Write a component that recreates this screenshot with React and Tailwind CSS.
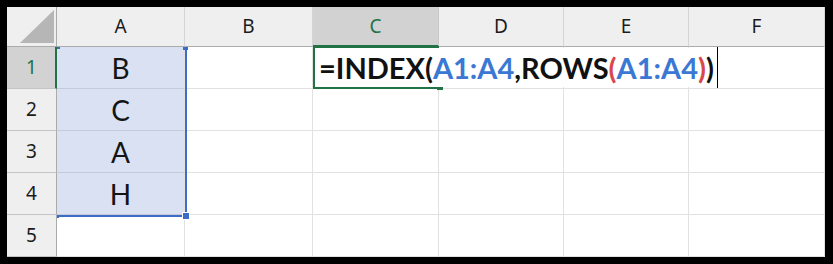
import React from 'react';

const cols = ['A', 'B', 'C', 'D', 'E', 'F'];
const rows = [1, 2, 3, 4, 5];
const values = { A1: 'B', A2: 'C', A3: 'A', A4: 'H' };

function ColHeader({ label }) {
    const active = label === 'C';
    return (
        <div
            className={
                active
                    ? 'flex items-center justify-center bg-[#d2d2d2] text-[#217346] border-r border-r-[#c8c8c8] border-b-2 border-b-[#217346] pt-[1px]'
                    : 'flex items-center justify-center bg-[#efefef] text-[#1b1b1b] border-r border-r-[#d4d4d4] border-b border-b-[#ababab]'
            }
        >
            <span className="text-[19px] leading-none font-['Noto_Sans',sans-serif]">{label}</span>
        </div>
    );
}

function RowHeader({ n }) {
    const active = n === 1;
    return (
        <div
            className={
                active
                    ? 'flex items-center justify-center bg-[#d2d2d2] text-[#217346] border-r-2 border-r-[#217346] border-b border-b-[#c4c4c4] pl-[1px]'
                    : 'flex items-center justify-center bg-[#efefef] text-[#1b1b1b] border-r border-r-[#ababab] border-b border-b-[#c4c4c4]'
            }
        >
            <span className="text-[19px] leading-none font-['Noto_Sans',sans-serif]">{n}</span>
        </div>
    );
}

// the cell being edited: formula spills over D1 and E1
function EditCell() {
    return (
        <div className="relative z-10 flex items-center border-l-2 border-t-2 border-b-2 border-[#217346] -mt-[1px]">
            <div className="flex items-center h-full pl-[4px] bg-white">
                <span className="text-[29px] leading-none font-bold whitespace-nowrap text-[#111] font-['Lato',sans-serif]">
                    =INDEX(
                    <span className="text-[#3b78d4]">A1:A4</span>
                    ,ROWS
                    <span className="text-[#d9474d]">(</span>
                    <span className="text-[#3b78d4]">A1:A4</span>
                    <span className="text-[#d9474d]">)</span>
                    )
                </span>
                <span className="ml-[3px] w-[1px] h-[41px] bg-black" />
            </div>
            <div className="absolute -right-[4px] -bottom-[3px] w-[6px] h-[3px] bg-[#217346]" />
        </div>
    );
}

function Cell({ col, row }) {
    const key = col + row;
    if (key === 'C1') return <EditCell />;
    const selected = col === 'A' && row <= 4;
    return (
        <div
            className={
                selected
                    ? 'flex items-center justify-center bg-[#d9e1f2] border-r border-r-[#e1e1e1] border-b border-b-[#c3cad8]'
                    : 'flex items-center justify-center bg-white border-r border-r-[#e1e1e1] border-b border-b-[#e1e1e1]'
            }
        >
            {values[key] && (
                <span className="text-[28px] leading-none text-[#141414] font-['Lato',sans-serif]">{values[key]}</span>
            )}
        </div>
    );
}

export default function App() {
    return (
        <div className="w-[833px] h-[264px] bg-black pt-[7px] pl-[7px] pr-[8px] pb-[7px]">
            <div className="relative w-[818px] h-[250px] bg-white overflow-hidden">
                <div className="grid grid-cols-[50px_128px_128px_126px_125px_125px_136px] grid-rows-[40px_repeat(5,42px)] w-full h-full">
                    <div className="relative bg-[#efefef] border-r border-r-[#ababab] border-b border-b-[#ababab]">
                        <svg className="absolute left-0 top-0" width="50" height="40" viewBox="0 0 50 40">
                            <polygon points="13,36 47,36 47,3" fill="#b6b6b6" />
                        </svg>
                    </div>
                    {cols.map(c => <ColHeader key={c} label={c} />)}
                    {rows.map(r => (
                        <React.Fragment key={r}>
                            <RowHeader n={r} />
                            {cols.map(c => <Cell key={c + r} col={c} row={r} />)}
                        </React.Fragment>
                    ))}
                </div>

                {/* selection outline over A1:A4 */}
                <div className="absolute left-[50px] top-[40px] w-[130px] h-[170px] border-r-2 border-b-2 border-[#3b6dc6] pointer-events-none">
                    <div className="absolute left-0 top-0 w-[3px] h-[2px] bg-[#3b6dc6]" />
                    <div className="absolute -right-[3px] top-0 w-[5px] h-[3px] bg-[#3b6dc6]" />
                    <div className="absolute left-0 -bottom-[3px] w-[2px] h-[3px] bg-[#3b6dc6]" />
                    <div className="absolute -right-[4px] -bottom-[4px] w-[6px] h-[6px] bg-[#3b6dc6] outline outline-1 outline-white" />
                </div>
            </div>
        </div>
    );
}
